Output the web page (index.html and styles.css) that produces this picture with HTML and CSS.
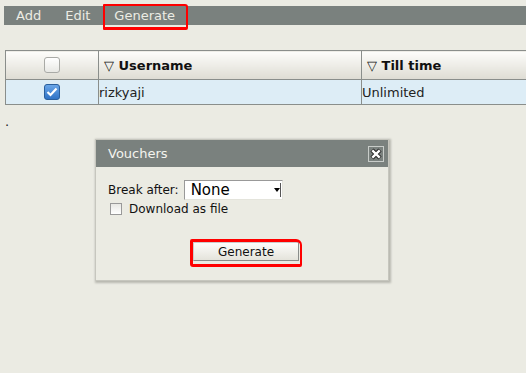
FILE: index.html
```html
<!DOCTYPE html>
<html>
<head>
<meta charset="utf-8">
<link rel="stylesheet" href="styles.css">
</head>
<body>
<div class="menubar">
  <span class="menu-item">Add</span>
  <span class="menu-item">Edit</span>
  <span class="menu-item">Generate</span>
</div>
<div class="mark mark-menu"></div>

<table class="grid">
  <tr class="head">
    <th class="c1"><span class="cb"></span></th>
    <th class="c2"><span class="tri">▽</span> Username</th>
    <th class="c3"><span class="tri">▽</span> Till time</th>
  </tr>
  <tr class="row">
    <td class="c1"><span class="cb checked"><svg width="12" height="10" viewBox="0 0 12 10"><path d="M1.5 5 L4.5 8 L10.5 1.5" fill="none" stroke="#fff" stroke-width="2.2"/></svg></span></td>
    <td class="c2">rizkyaji</td>
    <td class="c3">Unlimited</td>
  </tr>
</table>
<div class="dot">.</div>

<div class="dialog">
  <div class="dlg-title">
    <span>Vouchers</span>
    <span class="close"><svg width="12" height="12" viewBox="0 0 12 12"><path d="M2 2 L10 10 M10 2 L2 10" stroke="#222" stroke-width="4.5"/><path d="M2.3 2.3 L9.7 9.7 M9.7 2.3 L2.3 9.7" stroke="#fff" stroke-width="2.4"/></svg></span>
  </div>
  <div class="dlg-body">
    <div class="field">
      <span class="label">Break after:</span>
      <span class="select"><span>None</span><span class="arrow"></span></span>
    </div>
    <label class="check"><span class="box"></span>Download as file</label>
    <div class="actions"><span class="btn">Generate</span></div>
  </div>
</div>
<div class="mark mark-btn"></div>
</body>
</html>
```

FILE: styles.css
```css
html, body {
  margin: 0;
  padding: 0;
  background: #ebebe3;
  font-family: "DejaVu Sans", Verdana, sans-serif;
  font-size: 13px;
  color: #222;
  width: 526px;
  height: 373px;
  overflow: hidden;
  position: relative;
}

.menubar {
  margin: 6px 0 0 4px;
  height: 19px;
  background: #7a817e;
  display: flex;
  align-items: center;
}
.menu-item {
  color: #ecece4;
  padding: 0 12px;
  line-height: 19px;
}

.mark {
  position: absolute;
  border: 2px solid #f00;
}
.mark-menu {
  left: 103px;
  top: 4px;
  width: 81px;
  height: 21px;
  border-radius: 1px 3px 2px 1px;
  border-bottom-width: 3px;
}
.mark-btn {
  left: 190px;
  top: 239px;
  width: 107px;
  height: 22px;
  border-width: 3px 2px 3px 3px;
  border-radius: 2px 6px 2px 3px;
}

.grid {
  margin: 25px 0 0 5px;
  border-collapse: collapse;
  width: 540px;
  border: 1px solid #8a8e8b;
  table-layout: fixed;
}
.grid th, .grid td {
  border: 1px solid #8a8e8b;
  padding: 0;
  text-align: left;
  white-space: nowrap;
}
.c1 { width: 92px; text-align: center !important; }
.c2 { width: 257px; }
.head th {
  height: 28px;
  background: linear-gradient(#fdfdfb, #dedcd3);
  font-weight: bold;
  color: #111;
  padding-left: 5px;
}
.head th.c1 { padding-left: 0; }
.tri { font-weight: normal; }
.row td {
  height: 24px;
  background: #ddedf6;
  color: #222;
  padding-left: 0;
}

.cb {
  display: inline-block;
  width: 14px;
  height: 14px;
  border: 1px solid #a9aaa6;
  border-radius: 3px;
  background: linear-gradient(#fff, #e8e8e4);
  vertical-align: middle;
}
.cb.checked {
  background: linear-gradient(#6aa6e8, #2f73c6);
  border-color: #2a5f9c;
  display: inline-flex;
  align-items: center;
  justify-content: center;
}

.dot {
  margin: 10px 0 0 5px;
  line-height: 13px;
}

.dialog {
  position: absolute;
  left: 95px;
  top: 139px;
  width: 292px;
  height: 140px;
  background: #ebebe3;
  border: 1px solid #c6c6be;
  box-shadow: 1px 1px 2px 1px #b8b8b0;
}
.dlg-title {
  height: 27px;
  background: #7a817e;
  color: #f4f4ee;
  display: flex;
  align-items: center;
  justify-content: space-between;
  padding: 0 4px 0 12px;
}
.close {
  width: 14px;
  height: 14px;
  border: 1px solid #c8ccc9;
  display: flex;
  align-items: center;
  justify-content: center;
  margin-top: 1px;
}
.dlg-body {
  padding: 13px 0 0 12px;
}
.field {
  display: flex;
  align-items: center;
  gap: 5px;
}
.label { color: #111; font-size: 12px; }
.select {
  width: 99px;
  height: 20px;
  background: #fff;
  border: 1px solid #e4e4dc;
  border-left-color: #999;
  border-top-color: #999;
  display: flex;
  align-items: center;
  justify-content: space-between;
  font-size: 15px;
  color: #000;
  padding-left: 6px;
  box-sizing: border-box;
}
.arrow {
  width: 6px;
  height: 14px;
  margin-right: 1px;
  border-right: 1px solid #555;
  position: relative;
}
.arrow::after {
  content: "";
  position: absolute;
  left: 0;
  top: 5px;
  border-left: 3px solid transparent;
  border-right: 3px solid transparent;
  border-top: 4px solid #000;
}
.check {
  display: flex;
  align-items: center;
  margin-top: 2px;
  margin-left: 2px;
  color: #111;
  font-size: 12px;
}
.box {
  width: 10px;
  height: 10px;
  border: 1px solid #999;
  background: linear-gradient(#e8e8e4, #fff);
  margin-right: 7px;
}
.actions {
  margin: 26px 0 0 85px;
}
.btn {
  display: inline-flex;
  align-items: center;
  justify-content: center;
  width: 106px;
  height: 19px;
  border: 1px solid #8a8e8b;
  border-top-color: #ccc;
  border-left-color: #ccc;
  background: linear-gradient(#fdfdfb, #e4e3db);
  font-size: 12px;
  color: #111;
  box-sizing: border-box;
}
```
